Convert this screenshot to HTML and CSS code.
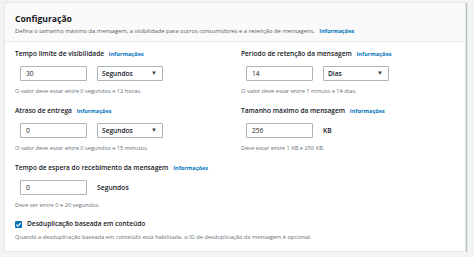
FILE: index.html
```html
<!DOCTYPE html>
<html lang="pt">
<head>
  <meta charset="UTF-8" />
  <meta name="viewport" content="width=device-width, initial-scale=1.0"/>
  <title>Configuração</title>
  <link rel="stylesheet" href="styles.css">
</head>
<body>
  <div class="panel">
    <div class="panel-header">
      <h2>Configuração</h2>
      <p>Defina o tamanho máximo da mensagem, a visibilidade para outros consumidores e a retenção de mensagens. <a class="info" href="#">Informações</a></p>
    </div>

    <div class="panel-body">
      <div class="grid">
        <div class="field">
          <div class="label">Tempo limite de visibilidade <a class="info" href="#">Informações</a></div>
          <div class="controls">
            <div class="input">30</div>
            <div class="select">Segundos <span class="caret">&#9660;</span></div>
          </div>
          <div class="hint">O valor deve estar entre 0 segundos e 12 horas.</div>
        </div>

        <div class="field">
          <div class="label">Período de retenção da mensagem <a class="info" href="#">Informações</a></div>
          <div class="controls">
            <div class="input">14</div>
            <div class="select">Dias <span class="caret">&#9660;</span></div>
          </div>
          <div class="hint">O valor deve estar entre 1 minuto e 14 dias.</div>
        </div>

        <div class="field">
          <div class="label">Atraso de entrega <a class="info" href="#">Informações</a></div>
          <div class="controls">
            <div class="input">0</div>
            <div class="select">Segundos <span class="caret">&#9660;</span></div>
          </div>
          <div class="hint">O valor deve estar entre 0 segundos e 15 minutos.</div>
        </div>

        <div class="field">
          <div class="label">Tamanho máximo da mensagem <a class="info" href="#">Informações</a></div>
          <div class="controls">
            <div class="input">256</div>
            <div class="unit">KB</div>
          </div>
          <div class="hint">Deve estar entre 1 KB e 256 KB.</div>
        </div>

        <div class="field">
          <div class="label">Tempo de espera do recebimento da mensagem <a class="info" href="#">Informações</a></div>
          <div class="controls">
            <div class="input">0</div>
            <div class="unit">Segundos</div>
          </div>
          <div class="hint">Deve ser entre 0 e 20 segundos.</div>
        </div>
      </div>

      <div class="check-field">
        <div class="check-row">
          <span class="checkbox">
            <svg viewBox="0 0 8 8" width="7" height="7"><path d="M1.6 4.1 L3.3 5.8 L6.4 2.3" fill="none" stroke="#fff" stroke-width="1.3"/></svg>
          </span>
          <span class="check-label">Desduplicação baseada em conteúdo</span>
        </div>
        <div class="hint">Quando a desduplicação baseada em conteúdo está habilitada, o ID de desduplicação da mensagem é opcional.</div>
      </div>
    </div>
  </div>
</body>
</html>
```

FILE: styles.css
```css
body {
  margin: 0;
  background: #f2f3f3;
  font-family: "Open Sans", "Noto Sans", sans-serif;
  color: #16191f;
}

.panel {
  margin: 2px 8px 0 4px;
  background: #fff;
  border: 1px solid #e3e6e6;
  box-shadow: 1px 1px 1px rgba(0, 28, 36, 0.25);
  height: 250px;
  box-sizing: border-box;
}

.panel-header {
  background: #fafafa;
  border-bottom: 1px solid #eaeded;
  padding: 9px 10px 5px;
}

.panel-header h2 {
  margin: 0;
  font-size: 8.6px;
  line-height: 14px;
  font-weight: 700;
}

.panel-header p {
  margin: 0;
  font-size: 5.8px;
  line-height: 10px;
  color: #545b64;
}

.info {
  color: #0073bb;
  font-weight: 700;
  font-size: 5.6px;
  text-decoration: none;
  margin-left: 3px;
}

.panel-body {
  padding: 6px 10px 0;
}

.grid {
  display: grid;
  grid-template-columns: 226px 1fr;
  row-gap: 9px;
}

.label {
  font-size: 6.6px;
  font-weight: 600;
  line-height: 12px;
}

.controls {
  display: flex;
  align-items: center;
  gap: 10px;
  margin: 6px 0 0 5px;
}

.input,
.select {
  height: 15px;
  box-sizing: border-box;
  border: 1px solid #aab7b8;
  border-radius: 1px;
  font-size: 6.6px;
  line-height: 13px;
}

.input {
  width: 67px;
  padding-left: 5px;
}

.select {
  width: 66px;
  padding: 0 5px 0 4px;
  display: flex;
  justify-content: space-between;
  font-weight: 600;
}

.caret {
  font-size: 6px;
  color: #3b4148;
}

.unit {
  font-size: 6.8px;
  font-weight: 600;
}

.hint {
  margin-top: 5px;
  font-size: 5.7px;
  line-height: 10px;
  color: #687078;
}

.check-field {
  margin-top: 8px;
}

.check-row {
  display: flex;
  align-items: center;
  gap: 5px;
  line-height: 12px;
}

.checkbox {
  width: 7px;
  height: 7px;
  background: #0073bb;
  border-radius: 1px;
  display: flex;
}

.check-label {
  font-size: 6.6px;
  font-weight: 600;
}

.check-field .hint {
  margin-top: 2px;
}
```
